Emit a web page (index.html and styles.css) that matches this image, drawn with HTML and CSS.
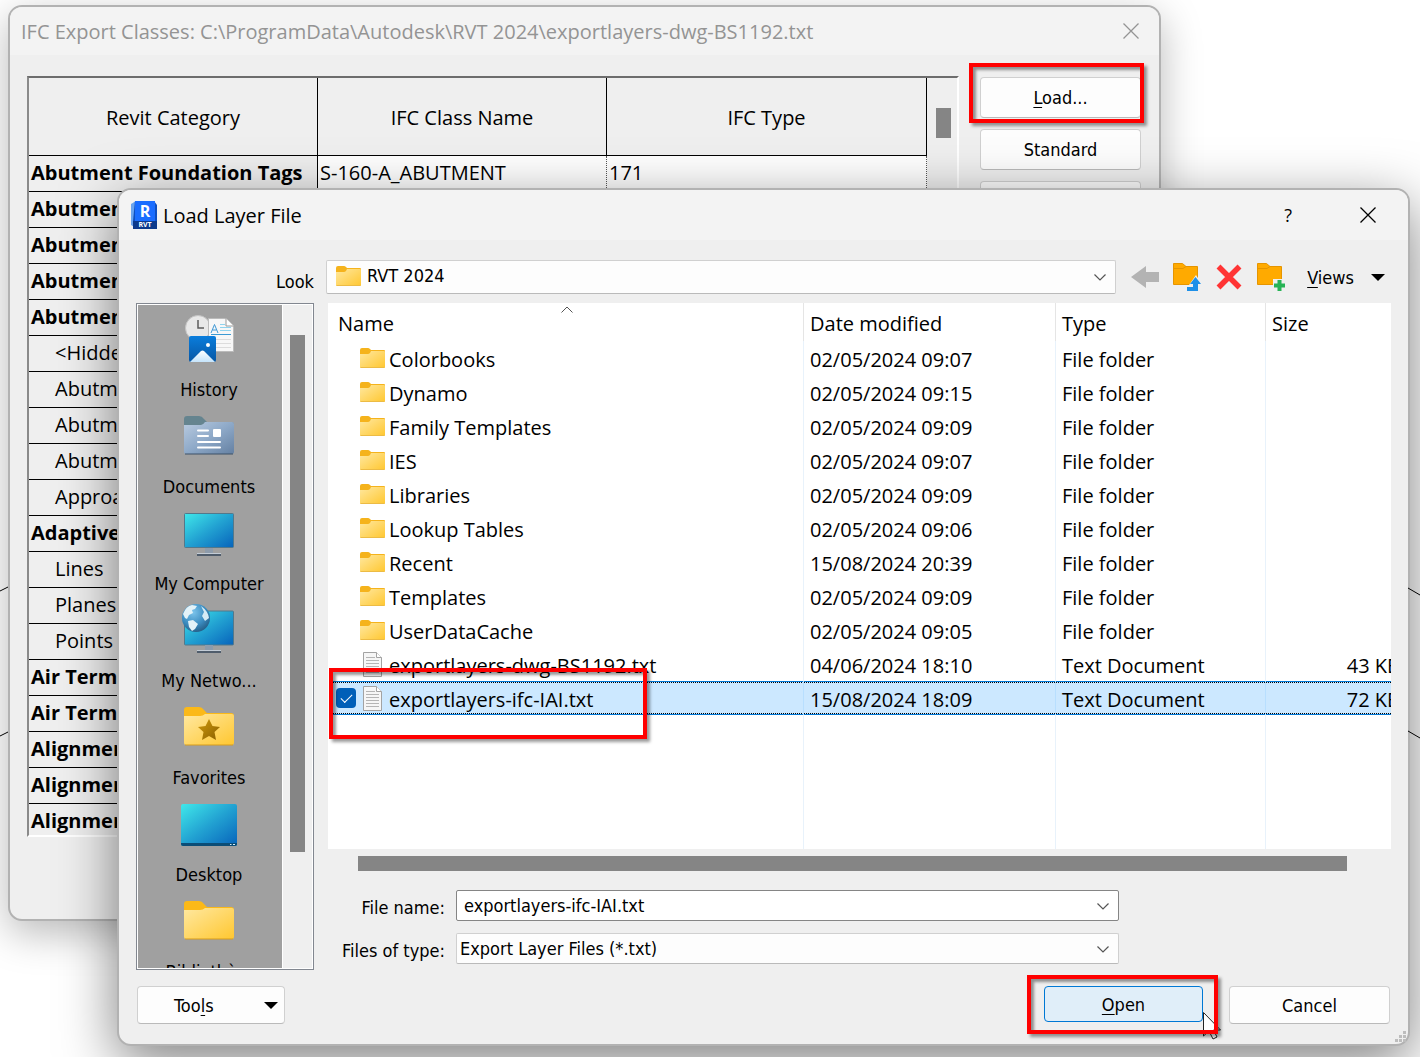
FILE: index.html
```html
<!DOCTYPE html>
<html lang="en">
<head>
    <meta charset="UTF-8">
    <meta name="viewport" content="width=device-width, initial-scale=1.0">
    <title>Load Layer File</title>
    <link rel="stylesheet" href="styles.css">
</head>
<body>
    <!-- shared icons -->
    <svg class="icon-defs" aria-hidden="true">
        <defs>
            <linearGradient id="g-folder" x1="0" y1="0" x2="1" y2="1">
                <stop offset="0" stop-color="#ffe8a0"/><stop offset="1" stop-color="#ffc730"/>
            </linearGradient>
            <linearGradient id="g-docs" x1="0" y1="0" x2="1" y2="1">
                <stop offset="0" stop-color="#b9cbe0"/><stop offset="0.5" stop-color="#8ea9c8"/><stop offset="1" stop-color="#6480a2"/>
            </linearGradient>
            <linearGradient id="g-screen" x1="0" y1="0" x2="1" y2="1">
                <stop offset="0" stop-color="#40e8ea"/><stop offset="0.5" stop-color="#22a2d2"/><stop offset="1" stop-color="#0763bb"/>
            </linearGradient>
            <linearGradient id="g-photo" x1="0" y1="0" x2="0" y2="1">
                <stop offset="0" stop-color="#0a7ddc"/><stop offset="1" stop-color="#0857a4"/>
            </linearGradient>
            <linearGradient id="g-hill" x1="0" y1="0" x2="0" y2="1">
                <stop offset="0" stop-color="#ffffff"/><stop offset="1" stop-color="#c5e4fb"/>
            </linearGradient>
            <linearGradient id="g-star" x1="0" y1="0" x2="1" y2="1">
                <stop offset="0" stop-color="#cf9a0c"/><stop offset="1" stop-color="#8a5f00"/>
            </linearGradient>
            <radialGradient id="g-globe" cx="0.4" cy="0.3" r="0.75">
                <stop offset="0" stop-color="#7cc4ec"/><stop offset="0.6" stop-color="#3b8cc0"/><stop offset="1" stop-color="#235a82"/>
            </radialGradient>
        </defs>
        <symbol id="folder-small" viewBox="0 0 25 20">
            <path d="M0 2Q0 0 2 0H8Q9 0 10 1L11 2H24Q25 2 25 3V6H0Z" fill="#f5b31c"/>
            <path d="M0 6H8Q9 6 10 5L11 3H24Q25 3 25 4V19Q25 20 24 20H1Q0 20 0 19Z" fill="url(#g-folder)"/>
            <path d="M0.5 19.5H24.5" stroke="#ecbb45" stroke-width="1"/>
        </symbol>
        <symbol id="folder-large" viewBox="0 0 50 39">
            <path d="M0 3Q0 0 3 0H15Q18 0 20 3L23 6H47Q50 6 50 9V20H0Z" fill="#fbb918"/>
            <path d="M0 9H16Q19 9 21 7H48Q50 7 50 9V36Q50 38 48 38H2Q0 38 0 36Z" fill="url(#g-folder)"/>
            <path d="M1 38H49" stroke="#d79c1c" stroke-width="1"/>
        </symbol>
        <symbol id="text-file" viewBox="0 0 19 25">
            <path d="M0.5 0.5H13.5L18.5 5.5V24.5H0.5Z" fill="#f6f6f6" stroke="#a3a3a3"/>
            <path d="M13.5 0.5V5.5H18.5" fill="#fff" stroke="#a3a3a3"/>
            <path d="M3 5.5H12M3 8.5H16M3 11.5H16M3 14.5H16M3 17.5H16M3 20.5H16" stroke="#b5b5b5"/>
        </symbol>
        <symbol id="chevron" viewBox="0 0 12 7">
            <path d="M0.5 0.5L6 6L11.5 0.5" fill="none" stroke="#555" stroke-width="1.2"/>
        </symbol>
        <symbol id="cross" viewBox="0 0 16 16">
            <path d="M0.5 0.5L15.5 15.5M15.5 0.5L0.5 15.5" fill="none" stroke="currentColor" stroke-width="1.3"/>
        </symbol>
        <symbol id="triangle" viewBox="0 0 14 7">
            <path d="M0 0H14L7 7Z" fill="#000"/>
        </symbol>
        <symbol id="toolbar-folder" viewBox="0 0 28 28">
            <path d="M0.5 0.5H9.5L13 3.5H24.5V21.5H0.5Z" fill="#ffaa00" stroke="#e69500"/>
            <path d="M0.5 5.5H10L13 3.5" fill="none" stroke="#e69500"/>
        </symbol>
    </svg>

    <main class="desktop">
        <!-- model lines behind the windows -->
        <svg class="model-lines model-lines-left" width="10" height="160" viewBox="0 0 10 160"><path d="M0 11L4 9L10 6M0 156L10 151" fill="none" stroke="#000"/></svg>
        <svg class="model-lines model-lines-right" width="12" height="160" viewBox="0 0 12 160"><path d="M0 8L12 15M0 151L12 158" fill="none" stroke="#000"/></svg>

        <section class="window classes-window">
            <header class="title-bar">
                <h2 class="title">IFC Export Classes: C:\ProgramData\Autodesk\RVT 2024\exportlayers-dwg-BS1192.txt</h2>
                <button class="close" aria-label="Close"><svg width="16" height="16"><use href="#cross"/></svg></button>
            </header>
            <div class="classes-body">
                <div class="classes-frame">
                    <table class="classes-table">
                        <colgroup><col class="col-category"><col class="col-class"><col></colgroup>
                        <thead>
                            <tr><th>Revit Category</th><th>IFC Class Name</th><th>IFC Type</th></tr>
                        </thead>
                        <tbody>
                            <tr class="group"><td>Abutment Foundation Tags</td><td>S-160-A_ABUTMENT</td><td>171</td></tr>
                            <tr class="group"><td>Abutment</td><td></td><td></td></tr>
                            <tr class="group"><td>Abutment</td><td></td><td></td></tr>
                            <tr class="group"><td>Abutment</td><td></td><td></td></tr>
                            <tr class="group"><td>Abutment</td><td></td><td></td></tr>
                            <tr><td>&lt;Hidden</td><td></td><td></td></tr>
                            <tr><td>Abutment</td><td></td><td></td></tr>
                            <tr><td>Abutment</td><td></td><td></td></tr>
                            <tr><td>Abutment</td><td></td><td></td></tr>
                            <tr><td>Approach</td><td></td><td></td></tr>
                            <tr class="group"><td>Adaptive</td><td></td><td></td></tr>
                            <tr><td>Lines</td><td></td><td></td></tr>
                            <tr><td>Planes</td><td></td><td></td></tr>
                            <tr><td>Points</td><td></td><td></td></tr>
                            <tr class="group"><td>Air Terminal</td><td></td><td></td></tr>
                            <tr class="group"><td>Air Terminal</td><td></td><td></td></tr>
                            <tr class="group"><td>Alignment</td><td></td><td></td></tr>
                            <tr class="group"><td>Alignment</td><td></td><td></td></tr>
                            <tr class="group"><td>Alignment</td><td></td><td></td></tr>
                        </tbody>
                    </table>
                    <div class="classes-scroll"><div class="thumb"></div></div>
                </div>
                <div class="side-buttons">
                    <div class="marked mark-load"><button class="btn"><u>L</u>oad...</button></div>
                    <button class="btn">Standard</button>
                    <button class="btn" aria-hidden="true"></button>
                </div>
            </div>
        </section>

        <section class="window load-dialog">
            <header class="title-bar">
                <svg class="app-icon" width="26" height="28" viewBox="0 0 26 28">
                    <path d="M0 3L5 0V27L0 24Z" fill="#6ba4ee"/>
                    <path d="M4 0H23L26 4V28H2V20Z" fill="#0e4fc0"/>
                    <path d="M4 0H24V20H4Z" fill="#1a6dff"/>
                    <path d="M2 20H26V28H2Z" fill="#0c3a8c"/>
                    <text x="14" y="16" class="app-letter">R</text>
                    <text x="14" y="26" class="app-code">RVT</text>
                </svg>
                <h1 class="title">Load Layer File</h1>
                <button class="help" aria-label="Help">?</button>
                <button class="close" aria-label="Close"><svg width="16" height="16"><use href="#cross"/></svg></button>
            </header>

            <div class="dialog-body">
                <div class="look-row">
                    <label class="look-label" for="look">Look</label>
                    <div class="combo look-combo">
                        <svg class="combo-icon" width="25" height="20"><use href="#folder-small"/></svg>
                        <select id="look"><option>RVT 2024</option></select>
                        <svg class="chevron" width="12" height="7"><use href="#chevron"/></svg>
                    </div>
                    <div class="toolbar">
                        <button class="tool" aria-label="Back">
                            <svg width="28" height="28" viewBox="0 0 28 28"><path d="M0 14L15 3V9H28V19H15V25Z" fill="#b3b3b3"/></svg>
                        </button>
                        <button class="tool" aria-label="Up one level">
                            <svg width="28" height="28" viewBox="0 0 28 28">
                                <use href="#toolbar-folder" width="28" height="28"/>
                                <path d="M13 23H18V22H16L23 12L28 20V28H13Z" fill="#efefef"/>
                                <path d="M14 24H20V21H17L22.500 14L28 21H25V28H14Z" fill="#1e90e8"/>
                            </svg>
                        </button>
                        <button class="tool" aria-label="Delete">
                            <svg width="28" height="28" viewBox="0 0 28 28"><path d="M3.500 3.500L24.500 24.500M24.500 3.500L3.500 24.500" stroke="#ff3434" stroke-width="5.500"/></svg>
                        </button>
                        <button class="tool" aria-label="New folder">
                            <svg width="28" height="28" viewBox="0 0 28 28">
                                <use href="#toolbar-folder" width="28" height="28"/>
                                <path d="M16 16H28V28H16Z" fill="#efefef"/>
                                <path d="M22.500 17V28M17 22.500H28" stroke="#27b355" stroke-width="4"/>
                            </svg>
                        </button>
                        <button class="views"><span><u>V</u>iews</span><svg width="14" height="7"><use href="#triangle"/></svg></button>
                    </div>
                </div>

                <div class="browser">
                    <nav class="places">
                        <div class="places-list">
                            <button class="place">
                                <svg width="50" height="50" viewBox="0 -2 50 50">
                                    <circle cx="14" cy="14" r="12.500" fill="#e8e8e8" stroke="#c4c4c4"/>
                                    <path d="M14 6V14H20" fill="none" stroke="#5c5c5c" stroke-width="1.500"/>
                                    <path d="M24.500 4.500H42L49.500 12V37.500H24.500Z" fill="#f7f7f7" stroke="#bbb"/>
                                    <path d="M42 4.500V12H49.500" fill="#fff" stroke="#999"/>
                                    <path d="M27 19L30.500 10.500L34 19M28.500 16H32.500" fill="none" stroke="#3f98d5"/>
                                    <path d="M36 10.500H41M36 13.500H47M36 16.500H47" stroke="#8fd3ee"/>
                                    <path d="M27 20.500H47" stroke="#3b9ad4"/>
                                    <path d="M27 25.500H47M27 29.500H47M27 33.500H47" stroke="#dcdcdc"/>
                                    <rect x="5" y="22" width="27" height="26" rx="2" fill="url(#g-photo)"/>
                                    <circle cx="24" cy="31" r="2" fill="#fff"/>
                                    <path d="M6 48L17 37Q18.500 36 20 37L31 48Z" fill="url(#g-hill)"/>
                                </svg>
                                <span>History</span>
                            </button>
                            <button class="place">
                                <svg width="50" height="50" viewBox="0 0 50 50">
                                    <path d="M0 10Q0 7 3 7H15Q18 7 20 10L23 13H47Q50 13 50 16V20H0Z" fill="#65848f"/>
                                    <path d="M0 16H17Q19 16 21 13H48Q50 13 50 15V43Q50 45 48 45H2Q0 45 0 43Z" fill="url(#g-docs)"/>
                                    <path d="M1 45H49" stroke="#3d5066"/>
                                    <path d="M14 21.500H24M14 27H24M14 33H36M14 38.500H36" stroke="#fff" stroke-width="2" stroke-linecap="round"/>
                                    <rect x="29" y="20" width="8" height="8" rx="1" fill="#fff"/>
                                </svg>
                                <span>Documents</span>
                            </button>
                            <button class="place">
                                <svg width="50" height="50" viewBox="0 0 50 50">
                                    <rect x="0.500" y="7.500" width="49" height="34" rx="1" fill="url(#g-screen)" stroke="#53788a"/>
                                    <rect x="21" y="42" width="8" height="5" fill="#8d9bab"/>
                                    <path d="M13 47H37V50H13Z" fill="#c3ccd6"/><path d="M13 49H37" stroke="#4f5c6b" stroke-width="2"/>
                                </svg>
                                <span>My Computer</span>
                            </button>
                            <button class="place">
                                <svg width="54" height="50" viewBox="-2 0 54 50">
                                    <rect x="0.500" y="8" width="49" height="34" rx="1" fill="url(#g-screen)" stroke="#53788a"/>
                                    <rect x="21" y="42" width="8" height="6" fill="#8d9bab"/>
                                    <path d="M13 47H37V50H13Z" fill="#c3ccd6"/><path d="M13 49H37" stroke="#4f5c6b" stroke-width="2"/>
                                    <circle cx="12" cy="15" r="14" fill="url(#g-globe)"/>
                                    <path d="M-1 11Q2 3 8 2L13 3L11 6L8 7L9 10L5 12L3 16L1 15Z" fill="#e3f2f8"/>
                                    <path d="M4 18L9 17L14 21L11 26L8 28L5 24Z" fill="#e3f2f8"/>
                                    <path d="M17 3Q24 8 25 15L21 18L18 13L20 9Z" fill="#d5ebf5"/>
                                </svg>
                                <span>My Netwo...</span>
                            </button>
                            <button class="place">
                                <svg width="50" height="50" viewBox="0 0 50 50">
                                    <use href="#folder-large" y="7" width="50" height="39"/>
                                    <path d="M25 19L28.500 26L36 27L30.500 32L32 40L25 36L18 40L19.500 32L14 27L21.500 26Z" fill="url(#g-star)"/>
                                </svg>
                                <span>Favorites</span>
                            </button>
                            <button class="place">
                                <svg width="56" height="50" viewBox="0 0 56 50">
                                    <rect y="7" width="56" height="42" rx="2" fill="url(#g-screen)"/>
                                    <path d="M0 46H56V47Q56 49 54 49H2Q0 49 0 47Z" fill="#0b4d77"/>
                                    <path d="M49 47.500H50.500M52 47.500H54" stroke="#d7ecf7"/>
                                </svg>
                                <span>Desktop</span>
                            </button>
                            <button class="place">
                                <svg width="50" height="50" viewBox="0 0 50 50"><use href="#folder-large" y="7" width="50" height="39"/></svg>
                                <span>Bibliothè...</span>
                            </button>
                        </div>
                        <div class="places-scroll"><div class="thumb"></div></div>
                    </nav>

                    <div class="browser-main">
                        <div class="marked mark-file">
                            <div class="file-list">
                                <table class="file-table">
                                    <colgroup><col><col class="col-date"><col class="col-type"><col class="col-size"></colgroup>
                                    <thead>
                                        <tr>
                                            <th class="sorted">Name<svg class="sort-arrow" width="12" height="7" viewBox="0 0 12 7"><path d="M0.500 6.500L6 1L11.500 6.500" fill="none" stroke="#555"/></svg></th>
                                            <th>Date modified</th><th>Type</th><th>Size</th>
                                        </tr>
                                    </thead>
                                    <tbody>
                                        <tr><td><div class="file"><svg class="folder"><use href="#folder-small"/></svg><span>Colorbooks</span></div></td><td>02/05/2024 09:07</td><td>File folder</td><td></td></tr>
                                        <tr><td><div class="file"><svg class="folder"><use href="#folder-small"/></svg><span>Dynamo</span></div></td><td>02/05/2024 09:15</td><td>File folder</td><td></td></tr>
                                        <tr><td><div class="file"><svg class="folder"><use href="#folder-small"/></svg><span>Family Templates</span></div></td><td>02/05/2024 09:09</td><td>File folder</td><td></td></tr>
                                        <tr><td><div class="file"><svg class="folder"><use href="#folder-small"/></svg><span>IES</span></div></td><td>02/05/2024 09:07</td><td>File folder</td><td></td></tr>
                                        <tr><td><div class="file"><svg class="folder"><use href="#folder-small"/></svg><span>Libraries</span></div></td><td>02/05/2024 09:09</td><td>File folder</td><td></td></tr>
                                        <tr><td><div class="file"><svg class="folder"><use href="#folder-small"/></svg><span>Lookup Tables</span></div></td><td>02/05/2024 09:06</td><td>File folder</td><td></td></tr>
                                        <tr><td><div class="file"><svg class="folder"><use href="#folder-small"/></svg><span>Recent</span></div></td><td>15/08/2024 20:39</td><td>File folder</td><td></td></tr>
                                        <tr><td><div class="file"><svg class="folder"><use href="#folder-small"/></svg><span>Templates</span></div></td><td>02/05/2024 09:09</td><td>File folder</td><td></td></tr>
                                        <tr><td><div class="file"><svg class="folder"><use href="#folder-small"/></svg><span>UserDataCache</span></div></td><td>02/05/2024 09:05</td><td>File folder</td><td></td></tr>
                                        <tr><td><div class="file"><svg class="text-file"><use href="#text-file"/></svg><span>exportlayers-dwg-BS1192.txt</span></div></td><td>04/06/2024 18:10</td><td>Text Document</td><td>43 KB</td></tr>
                                        <tr class="selected"><td><div class="file"><input type="checkbox" id="pick" checked><svg class="text-file"><use href="#text-file"/></svg><label for="pick">exportlayers-ifc-IAI.txt</label></div></td><td>15/08/2024 18:09</td><td>Text Document</td><td>72 KB</td></tr>
                                        <tr class="filler"><td></td><td></td><td></td><td></td></tr>
                                    </tbody>
                                </table>
                            </div>
                        </div>
                        <div class="list-scroll"><div class="thumb"></div></div>
                        <div class="fields">
                            <label for="file-name">File name:</label>
                            <div class="combo name-combo">
                                <input type="text" id="file-name" value="exportlayers-ifc-IAI.txt">
                                <svg class="chevron" width="12" height="7"><use href="#chevron"/></svg>
                            </div>
                            <label for="file-type">Files of type:</label>
                            <div class="combo">
                                <select id="file-type"><option>Export Layer Files (*.txt)</option></select>
                                <svg class="chevron" width="12" height="7"><use href="#chevron"/></svg>
                            </div>
                        </div>
                    </div>
                </div>

                <footer class="actions">
                    <button class="btn tools"><span>Too<u>l</u>s</span><svg width="14" height="7"><use href="#triangle"/></svg></button>
                    <div class="marked mark-open">
                        <button class="btn open"><u>O</u>pen</button>
                        <svg class="cursor" width="19" height="28" viewBox="0 0 19 28"><path d="M0.500 0.500V24L6 19L10 27L14 25L10.500 18H17.500Z" fill="#fff" stroke="#222"/></svg>
                    </div>
                    <button class="btn">Cancel</button>
                </footer>
            </div>
            <svg class="grip" width="12" height="12" viewBox="0 0 12 12"><path d="M8 0h3v3h-3zM4 4h3v3h-3zM8 4h3v3h-3zM0 8h3v3h-3zM4 8h3v3h-3zM8 8h3v3h-3z" fill="#bdbdbd"/></svg>
        </section>
    </main>
</body>
</html>
```
FILE: styles.css
```css
* {
    box-sizing: border-box;
}
body {
    margin: 0;
    background: #fff;
    color: #000;
    font-family: "Open Sans", "Noto Sans", sans-serif;
    font-size: 20px;
}
button, select, input {
    font-family: "DejaVu Sans Condensed", "DejaVu Sans", sans-serif;
    font-size: 18px;
    color: #000;
    margin: 0;
}
button {
    padding: 0;
    border: none;
    background: none;
}
svg {
    display: block;
    flex: none;
}
u {
    text-underline-offset: 3px;
    text-decoration-thickness: 1px;
}
.icon-defs {
    position: absolute;
    width: 0;
    height: 0;
}
.desktop {
    position: relative;
    min-height: 100vh;
    overflow: hidden;
}
.model-lines {
    position: absolute;
    top: 580px;
}
.model-lines-left {
    left: 0;
}
.model-lines-right {
    right: 0;
    z-index: 2;
}

/* windows */
.window {
    position: absolute;
    border: 2px solid #b2b2b2;
    border-radius: 14px;
    background: #efefef;
}
.title-bar {
    display: flex;
    align-items: center;
    height: 50px;
    background: #f3f3f3;
    border-radius: 12px 12px 0 0;
}
.title {
    flex: 1;
    margin: 0;
    font-size: 20px;
    font-weight: 400;
    white-space: nowrap;
}
.close {
    padding: 6px;
}
.marked {
    position: relative;
}
.marked::after {
    content: "";
    position: absolute;
    border: 4px solid #f00;
    box-shadow: 3px 3px 3px rgba(0, 0, 0, 0.4), inset 3px 3px 3px rgba(0, 0, 0, 0.4);
    pointer-events: none;
}
.thumb {
    background: #858585;
}
.btn {
    width: 161px;
    height: 41px;
    background: #fdfdfd;
    border: 1px solid #d0d0d0;
    border-bottom-color: #bababa;
    border-radius: 4px;
}

/* IFC Export Classes */
.classes-window {
    top: 5px;
    left: 8px;
    right: 259px;
    padding-bottom: 82px;
    box-shadow: 0 12px 40px rgba(0, 0, 0, 0.28);
}
.classes-window .title-bar {
    height: 48px;
    padding: 0 14px 0 11px;
    color: #949494;
}
.classes-window .close {
    color: #949494;
}
.classes-body {
    display: flex;
    gap: 21px;
    padding: 21px 18px 0 17px;
}
.classes-frame {
    display: flex;
    flex: 1;
    height: 761px;
    overflow: hidden;
    border: 2px solid #fff;
    border-top-color: #6d6d6d;
    border-left-color: #8a8a8a;
}
.classes-table {
    flex: 1;
    table-layout: fixed;
    border-collapse: separate;
    border-spacing: 0;
    height: max-content;
}
.col-category, .col-class {
    width: 289px;
}
.classes-table th {
    height: 78px;
    padding: 2px 0 0;
    font-weight: 400;
    border-right: 1px solid #000;
    border-bottom: 1px solid #000;
}
.classes-table td {
    height: 36px;
    padding: 0 2px 2px;
    line-height: 27px;
    white-space: nowrap;
    overflow: hidden;
    background: #fff;
    border-right: 1px dotted #555;
    border-bottom: 1px solid #000;
}
.classes-table td:first-child {
    padding-left: 26px;
    background: #efefef;
    border-right: 1px solid #000;
}
.classes-table .group td:first-child {
    padding-left: 2px;
    font-weight: 700;
}
.classes-scroll {
    width: 30px;
    padding: 30px 6px 0 9px;
}
.classes-scroll .thumb {
    height: 30px;
}
.side-buttons {
    display: flex;
    flex-direction: column;
    gap: 11px;
    padding-top: 1px;
}
.mark-load::after {
    inset: -14px -3px -5px -11px;
}

/* Load Layer File */
.load-dialog {
    top: 188px;
    left: 117px;
    right: 10px;
    box-shadow: 0 16px 56px rgba(0, 0, 0, 0.5);
}
.load-dialog .title-bar {
    padding: 0 26px 0 12px;
}
.app-icon {
    margin-right: 6px;
}
.app-letter {
    font: 700 16px "Open Sans", sans-serif;
    fill: #fff;
    text-anchor: middle;
}
.app-code {
    font: 700 7px "Open Sans", sans-serif;
    fill: #fff;
    text-anchor: middle;
}
.help {
    padding: 0 12px;
    margin-right: 50px;
    font-family: "Open Sans", sans-serif;
    font-size: 18px;
}
.dialog-body {
    padding: 20px 17px 20px 17px;
}
.look-row {
    display: flex;
    align-items: center;
    gap: 12px;
    margin-bottom: 9px;
}
.look-label {
    width: 178px;
    padding-top: 8px;
    text-align: right;
}
label {
    font-family: "DejaVu Sans Condensed", "DejaVu Sans", sans-serif;
    font-size: 18px;
}
.combo {
    position: relative;
    height: 31px;
}
.combo select, .combo input {
    display: block;
    appearance: none;
    width: 100%;
    height: 100%;
    padding: 0 30px 0 3px;
    background: #fdfdfd;
    border: 1px solid #d0d0d0;
    border-bottom-color: #bababa;
    border-radius: 2px;
}
.name-combo input {
    padding-left: 7px;
    background: #fff;
    border-color: #858585;
}
.chevron {
    position: absolute;
    top: 50%;
    right: 10px;
    margin-top: -3px;
    pointer-events: none;
}
.look-combo {
    flex: 1;
    height: 34px;
}
.look-combo select {
    padding: 0 30px 3px 40px;
}
.combo-icon {
    position: absolute;
    top: 6px;
    left: 10px;
}
.toolbar {
    display: flex;
    align-items: center;
    gap: 14px;
    padding: 0 6px 0 3px;
}
.tool {
    width: 28px;
    height: 28px;
}
.views {
    display: flex;
    align-items: center;
    gap: 17px;
    padding-left: 8px;
}
.browser {
    display: flex;
    gap: 14px;
}
.places {
    display: flex;
    width: 178px;
    height: 667px;
    padding: 1px;
    background: #fff;
    border: 1px solid #828790;
}
.places-list {
    flex: 1;
    padding: 5px 2px 0 0;
    overflow: hidden;
    background: #a0a0a0;
}
.place {
    display: flex;
    flex-direction: column;
    align-items: center;
    gap: 16px;
    width: 100%;
    height: 97px;
    padding-top: 2px;
}
.place span {
    line-height: 24px;
}
.places-scroll {
    width: 29px;
    margin-left: 1px;
    padding: 30px 7px 0;
    background: #efefef;
}
.places-scroll .thumb {
    height: 517px;
}
.browser-main {
    flex: 1;
    min-width: 0;
}
.file-list {
    height: 546px;
    padding-left: 5px;
    overflow: hidden;
    background: #fff;
}
.file-table {
    width: calc(100% + 16px);
    height: 100%;
    table-layout: fixed;
    border-collapse: separate;
    border-spacing: 0;
}
.col-date {
    width: 252px;
}
.col-type {
    width: 210px;
}
.col-size {
    width: 141px;
}
.file-table th {
    position: relative;
    height: 38px;
    padding: 2px 6px 0;
    font-weight: 400;
    text-align: left;
    border-right: 1px solid #e5e5e5;
}
.file-table td {
    height: 34px;
    padding: 2px 6px 0;
    line-height: 27px;
    white-space: nowrap;
    border-right: 1px solid #e8f2fb;
}
.file-table td:first-child {
    padding: 0;
}
.file-table td:last-child {
    text-align: right;
}
.file-table .filler td {
    height: auto;
}
.file-table th:first-child {
    padding-left: 5px;
}
.sort-arrow {
    position: absolute;
    top: 3px;
    left: 228px;
}
.file {
    position: relative;
    display: flex;
    align-items: center;
    height: 32px;
    padding-left: 27px;
}
.file span, .file label {
    padding-top: 2px;
    font-family: "Open Sans", "Noto Sans", sans-serif;
    font-size: 20px;
}
.folder {
    width: 25px;
    height: 20px;
    margin-right: 4px;
}
.text-file {
    width: 19px;
    height: 25px;
    margin: 0 7px 0 3px;
}
.file input {
    appearance: none;
    width: 20px;
    height: 20px;
    margin: 0 4px 0 -24px;
    background: #005fb8;
    border-radius: 4px;
}
.file input::after {
    content: "";
    display: block;
    width: 10px;
    height: 5px;
    margin: 6px 0 0 5px;
    border: solid #fff;
    border-width: 0 0 1px 1px;
    transform: rotate(-45deg);
}
.selected td {
    background-color: #cce8ff;
    background-image: repeating-linear-gradient(90deg, #000 0 1px, transparent 1px 2px), repeating-linear-gradient(90deg, #000 0 1px, transparent 1px 2px);
    background-size: 100% 1px;
    background-position: 0 1px, 0 calc(100% - 1px);
    background-repeat: no-repeat;
    box-shadow: inset 0 1px #0078d7, inset 0 -1px #0078d7;
    border-right-color: #b8dfff;
}
.mark-file::after {
    top: 365px;
    left: 1px;
    width: 310px;
    height: 63px;
}
.list-scroll {
    padding: 7px 44px 19px 30px;
}
.list-scroll .thumb {
    height: 15px;
}
.fields {
    display: grid;
    grid-template-columns: 117px 1fr;
    gap: 12px 11px;
    align-items: center;
    padding-right: 272px;
}
.fields label {
    padding-top: 4px;
    text-align: right;
    white-space: nowrap;
}
.actions {
    display: flex;
    gap: 26px;
    margin-top: 16px;
    padding: 0 1px;
}
.actions .btn {
    height: 38px;
}
.actions .tools {
    display: flex;
    align-items: center;
    justify-content: space-between;
    width: 148px;
    margin-right: auto;
    padding: 0 6px 0 36px;
}
.actions .open {
    width: 159px;
    height: 36px;
    background: #e0eef9;
    border-color: #0078d4;
}
.mark-open::after {
    inset: -11px -15px -10px -17px;
}
.cursor {
    position: absolute;
    top: 26px;
    left: 159px;
}
.grip {
    position: absolute;
    right: 1px;
    bottom: 1px;
}
```
